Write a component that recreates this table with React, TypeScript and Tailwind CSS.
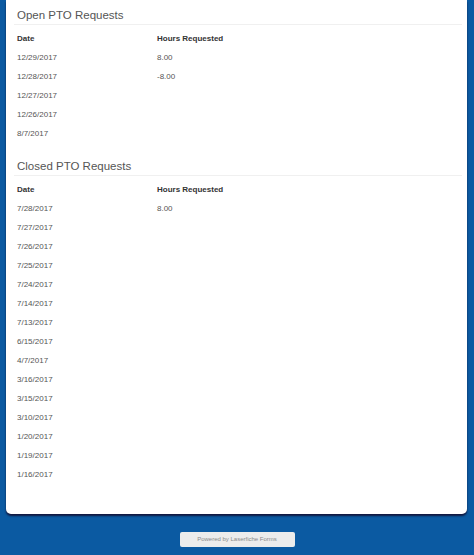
const openRequests = [
  { date: "12/29/2017", hours: "8.00" },
  { date: "12/28/2017", hours: "-8.00" },
  { date: "12/27/2017", hours: "" },
  { date: "12/26/2017", hours: "" },
  { date: "8/7/2017", hours: "" },
];

const closedRequests = [
  { date: "7/28/2017", hours: "8.00" },
  { date: "7/27/2017", hours: "" },
  { date: "7/26/2017", hours: "" },
  { date: "7/25/2017", hours: "" },
  { date: "7/24/2017", hours: "" },
  { date: "7/14/2017", hours: "" },
  { date: "7/13/2017", hours: "" },
  { date: "6/15/2017", hours: "" },
  { date: "4/7/2017", hours: "" },
  { date: "3/16/2017", hours: "" },
  { date: "3/15/2017", hours: "" },
  { date: "3/10/2017", hours: "" },
  { date: "1/20/2017", hours: "" },
  { date: "1/19/2017", hours: "" },
  { date: "1/16/2017", hours: "" },
];

type Row = { date: string; hours: string };

const RequestSection = ({ title, rows, className }: { title: string; rows: Row[]; className?: string }) => {
  return (
    <div className={className}>
      <div className="ml-[8px] mr-[5px] border-b border-[#f0f0f0] pb-[1px]">
        <h2 className="pl-[3px] text-[11.5px] leading-[16px] text-[#555] font-normal">{title}</h2>
      </div>
      <div className="mt-[4px] pl-[11px]">
        <div className="flex h-[19px] items-center text-[8px] font-bold text-[#333]">
          <div className="w-[140px]">Date</div>
          <div>Hours Requested</div>
        </div>
        {rows.map((row, i) => (
          <div key={i} className="flex h-[19px] items-center text-[8px] text-[#555]">
            <div className="w-[140px]">{row.date}</div>
            <div>{row.hours}</div>
          </div>
        ))}
      </div>
    </div>
  );
};

export default function App() {
  return (
    <div className="flex h-[555px] w-[474px] flex-col overflow-hidden bg-[#0b5aa2] font-['Liberation_Sans',Arial,sans-serif]">
      <div className="ml-[6px] mr-[7px] h-[514px] shrink-0 rounded-b-[5px] bg-white pt-[7px] shadow-[0_2px_2px_rgba(20,0,30,0.75)]">
        <RequestSection title="Open PTO Requests" rows={openRequests} />
        <RequestSection title="Closed PTO Requests" rows={closedRequests} className="mt-[15px]" />
      </div>
      <div className="mt-[18px] flex justify-center">
        <div className="flex h-[15px] w-[115px] items-center justify-center rounded-[2px] bg-[#ececec] text-[6px] text-[#8a8a8a]">
          Powered by Laserfiche Forms
        </div>
      </div>
    </div>
  );
}
